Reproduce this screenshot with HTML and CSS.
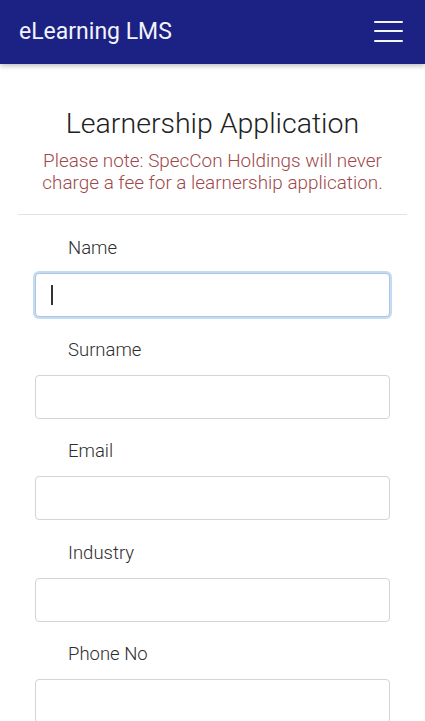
FILE: index.html
```html
<!DOCTYPE html>
<html>
<head>
<meta charset="utf-8">
<link rel="stylesheet" href="styles.css">
</head>
<body>
<header class="navbar">
  <span class="brand">eLearning LMS</span>
  <button class="toggler" aria-label="menu">
    <span></span><span></span><span></span>
  </button>
</header>
<main class="page">
  <h1 class="title">Learnership Application</h1>
  <p class="note">Please note: SpecCon Holdings will never charge a fee for a learnership application.</p>
  <hr class="divider">
  <form class="form">
    <div class="group">
      <label class="label">Name</label>
      <div class="input focused"><span class="caret"></span></div>
    </div>
    <div class="group">
      <label class="label">Surname</label>
      <div class="input"></div>
    </div>
    <div class="group">
      <label class="label">Email</label>
      <div class="input"></div>
    </div>
    <div class="group">
      <label class="label">Industry</label>
      <div class="input"></div>
    </div>
    <div class="group">
      <label class="label">Phone No</label>
      <div class="input"></div>
    </div>
  </form>
</main>
</body>
</html>
```
FILE: styles.css
```css
* { box-sizing: border-box; }
html, body { margin: 0; padding: 0; }
body {
  font-family: Roboto, "Liberation Sans", sans-serif;
  background: #fff;
  color: #333;
  width: 425px;
  height: 721px;
  overflow: hidden;
}
.navbar {
  height: 64px;
  background: #1c2283;
  display: flex;
  align-items: center;
  justify-content: space-between;
  padding: 0 22px 0 19px;
  box-shadow: 0 2px 5px rgba(0,0,0,0.25);
  position: relative;
}
.brand {
  color: #f2f3fb;
  font-size: 23px;
  font-weight: 400;
  margin-top: -2px;
}
.toggler {
  background: none;
  border: 0;
  padding: 0;
  width: 29px;
  height: 21px;
  display: flex;
  flex-direction: column;
  justify-content: space-between;
  margin-top: -2px;
}
.toggler span {
  display: block;
  height: 2px;
  width: 29px;
  background: #f4f4fb;
  border-radius: 1px;
}
.page {
  padding: 0 18px;
}
.title {
  margin: 42px 0 0;
  text-align: center;
  font-size: 28.5px;
  font-weight: 300;
  color: #222;
  line-height: 36px;
}
.note {
  margin: 8px 0 0;
  text-align: center;
  color: #a0474a;
  font-size: 18.9px;
  font-weight: 300;
  line-height: 22px;
  padding: 0 10px;
}
.divider {
  margin: 20px 0 0;
  border: 0;
  border-top: 1px solid #e3e3e3;
}
.form {
  padding: 0 17px;
  display: flex;
  flex-direction: column;
}
.group {
  display: flex;
  flex-direction: column;
}
.label {
  padding-left: 33px;
  font-size: 18.5px;
  font-weight: 300;
  color: #2e2e2e;
  line-height: 24px;
  margin-top: 21px;
  margin-bottom: 13px;
}
.group + .group .label {
  margin-top: 20.6px;
}
.input {
  height: 44px;
  border: 1px solid #d4d4d4;
  border-radius: 4px;
  background: #fff;
  display: flex;
  align-items: center;
  padding-left: 15px;
}
.input.focused {
  border-color: #a9c6e6;
  box-shadow: 0 0 0 2px #c6dbf1;
}
.caret {
  display: block;
  width: 1.5px;
  height: 20px;
  background: #333;
}
```
